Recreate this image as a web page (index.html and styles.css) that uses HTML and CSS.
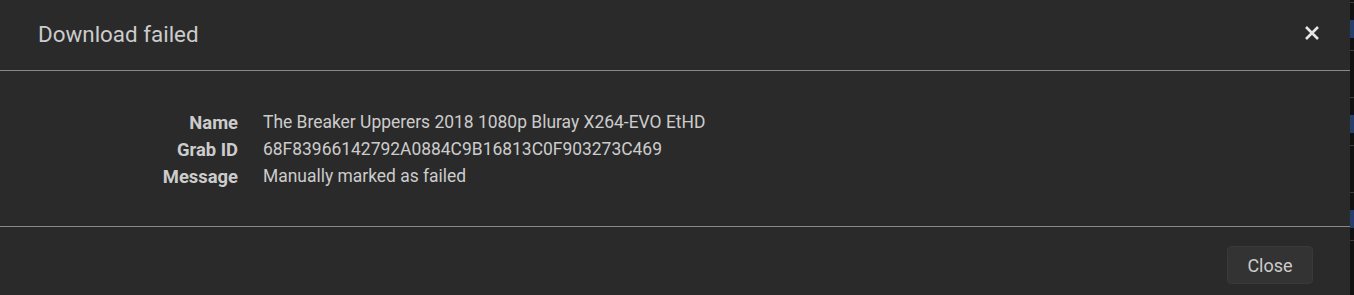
FILE: index.html
```html
<!DOCTYPE html>
<html>
<head>
<meta charset="utf-8">
<link rel="stylesheet" href="styles.css">
</head>
<body>
<div class="page">
  <div class="modal">
    <div class="header">
      <div class="title">Download failed</div>
      <button class="x" aria-label="Close">
        <svg width="16" height="16" viewBox="0 0 16 16"><path d="M2 2L14 14M14 2L2 14" stroke="#e6e6e6" stroke-width="2.6" stroke-linecap="butt"/></svg>
      </button>
    </div>
    <div class="body">
      <dl class="details">
        <dt>Name</dt><dd>The Breaker Upperers 2018 1080p Bluray X264-EVO EtHD</dd>
        <dt>Grab ID</dt><dd>68F83966142792A0884C9B16813C0F903273C469</dd>
        <dt>Message</dt><dd>Manually marked as failed</dd>
      </dl>
    </div>
    <div class="footer">
      <button class="btn">Close</button>
    </div>
  </div>
  <div class="behind">
    <div class="row"><span class="bar"></span></div>
    <div class="row"></div>
    <div class="row"><span class="bar"></span></div>
    <div class="row"></div>
    <div class="row"><span class="bar"></span></div>
    <div class="row"></div>
  </div>
</div>
</body>
</html>
```
FILE: styles.css
```css
html, body { margin: 0; padding: 0; background: #111; }
body { font-family: Roboto, "Liberation Sans", sans-serif; overflow: hidden; height: 295px; }
.page { display: flex; width: 1354px; height: 295px; overflow: hidden; }
.modal { width: 1350px; flex: none; background: #2a2a2a; display: flex; flex-direction: column; }
.header { height: 71px; flex: none; box-sizing: border-box; border-bottom: 1px solid #888; display: flex; align-items: center; justify-content: space-between; padding: 0 30px 0 38px; }
.title { color: #ccc; font-size: 22.4px; margin-top: -2px; }
.x { background: none; border: 0; padding: 0; display: flex; cursor: pointer; margin-top: -4px; }
.body { height: 156px; flex: none; box-sizing: border-box; border-bottom: 1px solid #888; padding: 38px 0 0 0; }
.details { margin: 0; display: grid; grid-template-columns: 238px auto; column-gap: 25px; row-gap: 0; line-height: 27px; font-size: 17.45px; color: #ccc; }
.details dt { text-align: right; font-weight: bold; font-size: 18.4px; }
.details dd { margin: 0; }
.footer { display: flex; justify-content: flex-end; padding: 19px 37px 0 0; }
.btn { width: 86px; height: 38px; background: #333; border: 1px solid #393939; border-radius: 4px; color: #ccc; font-family: Roboto, "Liberation Sans", sans-serif; font-size: 18px; padding: 0; }
.behind { flex: 1; display: flex; flex-direction: column; padding-top: 2px; overflow: hidden; }
.row { height: 47.5px; box-sizing: border-box; border-top: 1px solid #3a3a3a; position: relative; flex: none; }
.bar { position: absolute; left: 0; right: 0; top: 17px; height: 18px; background: #24406a; }
```
